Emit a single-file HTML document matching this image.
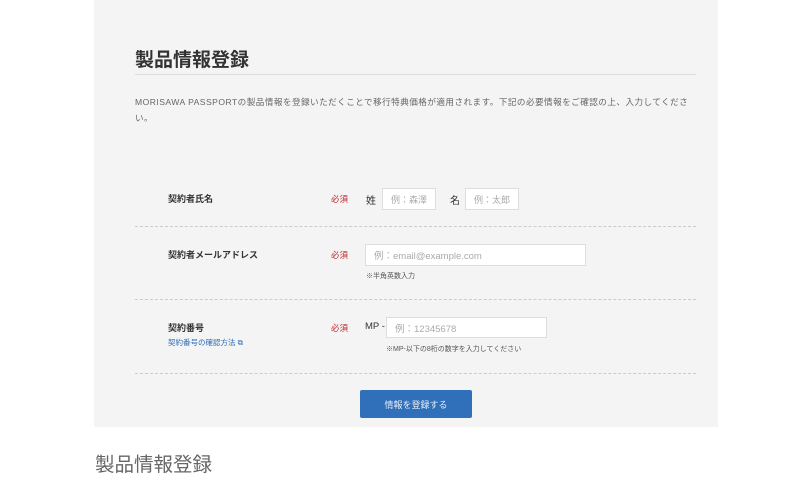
<!DOCTYPE html>
<html><head><meta charset="utf-8"><style>
*{margin:0;padding:0;box-sizing:border-box}
body{width:812px;height:480px;background:#fff;font-family:"Liberation Sans","Noto Sans CJK JP",sans-serif;position:relative;overflow:hidden;color:#333}
.p{position:absolute;left:94px;top:0;width:624px;height:427px;background:#f4f4f4}
.a{position:absolute;white-space:nowrap}
.h{left:135px;top:45px;font-size:19px;font-weight:bold;color:#333}
.hl{left:135px;top:74px;width:561px;height:1px;background:#ddd}
.d{font-size:8.6px;color:#666;left:135px;letter-spacing:0.45px}
.dl{left:135px;width:561px;border-top:1px dashed #ccc}
.lb{font-size:9px;font-weight:bold;color:#333;left:168px}
.rq{font-size:8.5px;color:#c0282d;left:331px}
.in{background:#fff;border:1px solid #ddd;font-size:9px;color:#aaa;padding-left:8px;display:flex;align-items:center}
.nt{font-size:7px;color:#555}
.t{font-size:10px;color:#333}
</style></head><body>
<div class="p"></div>
<div class="a h">製品情報登録</div>
<div class="a hl"></div>
<div class="a d" style="top:96px">MORISAWA PASSPORTの製品情報を登録いただくことで移行特典価格が適用されます。下記の必要情報をご確認の上、入力してくださ</div>
<div class="a d" style="top:112px">い。</div>

<div class="a lb" style="top:192px">契約者氏名</div>
<div class="a rq" style="top:193px">必須</div>
<div class="a t" style="left:366px;top:192px">姓</div>
<div class="a in" style="left:382px;top:188px;width:54px;height:22px">例：森澤</div>
<div class="a t" style="left:450px;top:192px">名</div>
<div class="a in" style="left:465px;top:188px;width:54px;height:22px">例：太郎</div>
<div class="a dl" style="top:226px"></div>

<div class="a lb" style="top:248px">契約者メールアドレス</div>
<div class="a rq" style="top:249px">必須</div>
<div class="a in" style="left:365px;top:244px;width:221px;height:22px;font-size:9.5px">例：email@example.com</div>
<div class="a nt" style="left:366px;top:271px">※半角英数入力</div>
<div class="a dl" style="top:299px"></div>

<div class="a lb" style="top:321px">契約番号</div>
<div class="a" style="left:168px;top:337px;font-size:7.5px;color:#2b6cb5">契約番号の確認方法 ⧉</div>
<div class="a rq" style="top:322px">必須</div>
<div class="a t" style="left:365px;top:321px;font-size:9.5px">MP -</div>
<div class="a in" style="left:386px;top:317px;width:161px;height:21px;font-size:9.5px">例：12345678</div>
<div class="a nt" style="left:386px;top:344px">※MP-以下の8桁の数字を入力してください</div>
<div class="a dl" style="top:373px"></div>

<div class="a" style="left:360px;top:390px;width:112px;height:28px;background:#306fba;border-radius:2px;color:#e8eef8;font-size:9px;display:flex;align-items:center;justify-content:center">情報を登録する</div>

<div class="a" style="left:95px;top:448px;font-size:19.5px;color:#666">製品情報登録</div>
</body></html>
